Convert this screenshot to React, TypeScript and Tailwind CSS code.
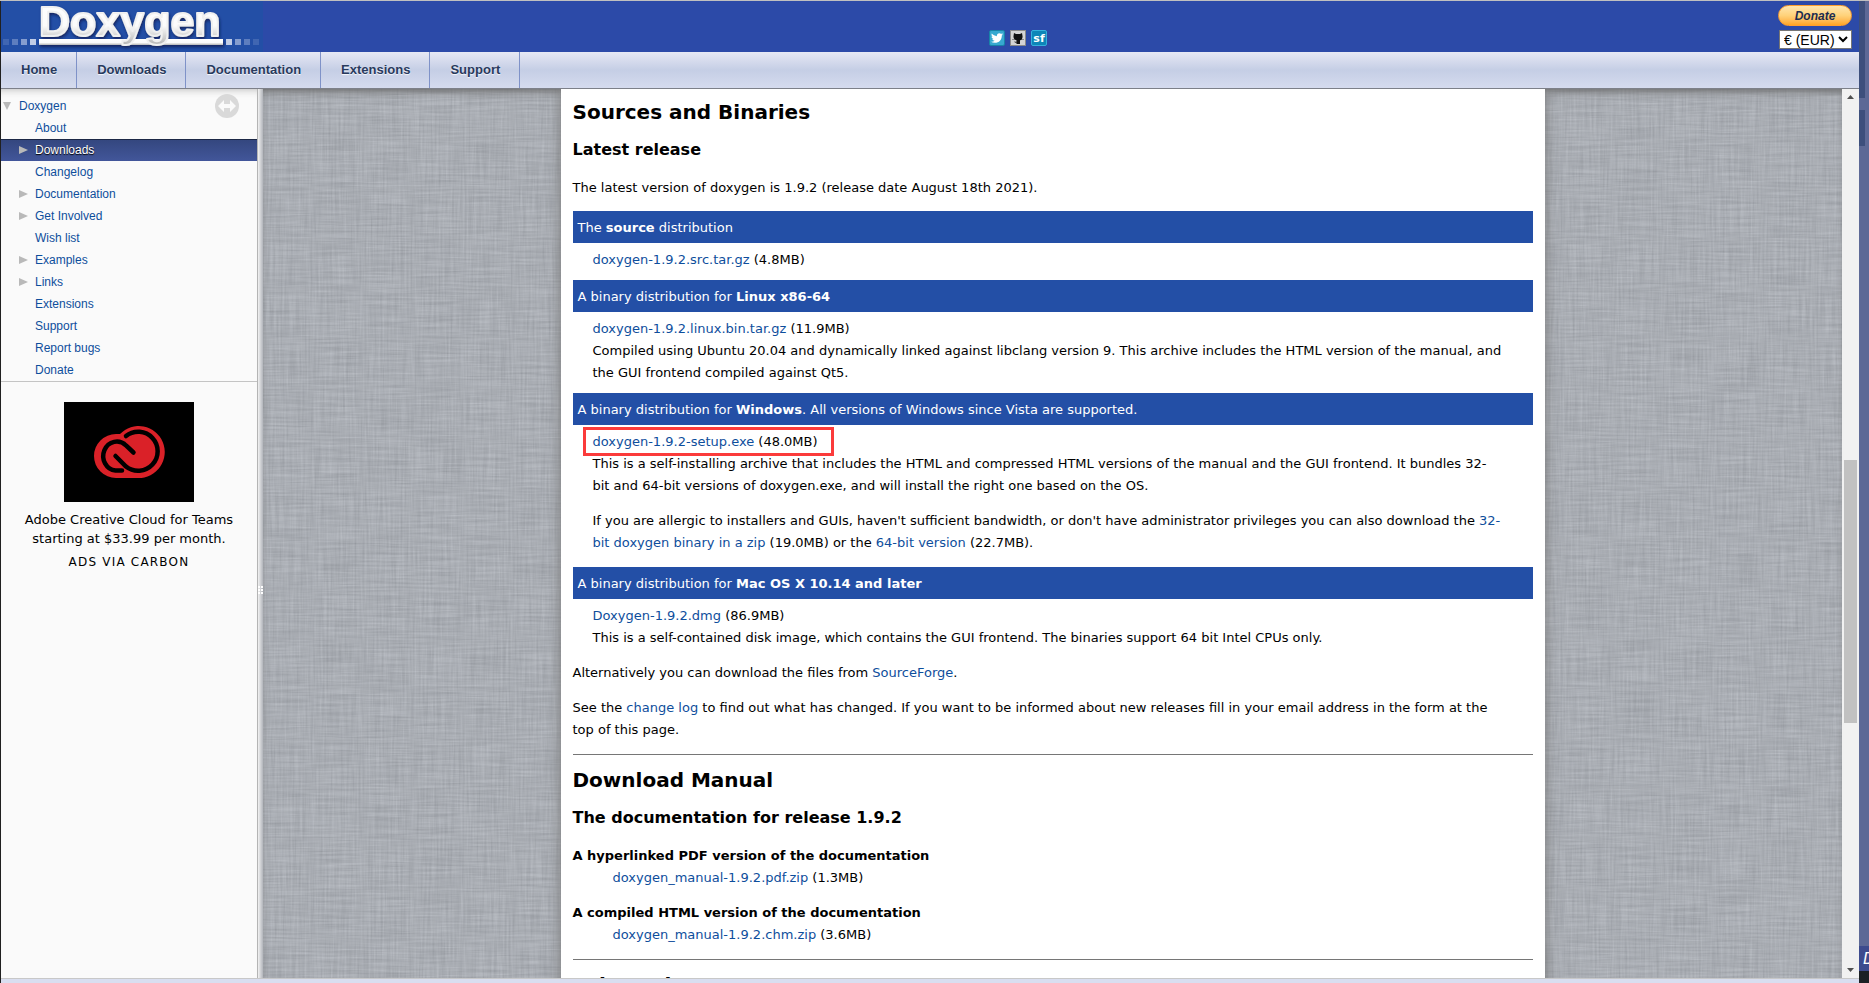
import { FaTwitter } from 'react-icons/fa';

const tabs = ['Home', 'Downloads', 'Documentation', 'Extensions', 'Support'];

const navItems = [
  { label: 'About' },
  { label: 'Downloads', arrow: true, selected: true },
  { label: 'Changelog' },
  { label: 'Documentation', arrow: true },
  { label: 'Get Involved', arrow: true },
  { label: 'Wish list' },
  { label: 'Examples', arrow: true },
  { label: 'Links', arrow: true },
  { label: 'Extensions' },
  { label: 'Support' },
  { label: 'Report bugs' },
  { label: 'Donate' },
];

function Logo() {
  return (
    <svg className="shrink-0" width="262" height="51" viewBox="0 0 262 51" role="img" aria-label="Doxygen">
      <defs>
        <linearGradient id="metal" x1="0" y1="0" x2="0" y2="1">
          <stop offset="0" stopColor="#ffffff" />
          <stop offset="0.6" stopColor="#fbfbfb" />
          <stop offset="1" stopColor="#b4b4b4" />
        </linearGradient>
        <filter id="logo-shadow" x="-10%" y="-20%" width="120%" height="150%">
          <feDropShadow dx="1" dy="2" stdDeviation="1.5" floodColor="#0a1f50" floodOpacity="0.8" />
        </filter>
      </defs>
      <rect width="262" height="51" fill="#234fa6" />
      {[[2, 0.15], [11, 0.3], [20, 0.5], [29, 0.8], [225, 0.8], [234, 0.5], [243, 0.3], [252, 0.15]].map(([x, opacity]) => (
        <rect key={x} x={x} y="38" width="6" height="6" fill="#e8ecf8" opacity={opacity} />
      ))}
      <g filter="url(#logo-shadow)">
        <rect x="38" y="38" width="184" height="6" fill="url(#metal)" />
        <text
          x="38"
          y="35"
          fontFamily="'Liberation Sans', Arial, sans-serif"
          fontWeight="700"
          fontSize="43"
          fill="url(#metal)"
          stroke="#f0f0f0"
          strokeWidth="2"
          strokeLinejoin="round"
        >
          Doxygen
        </text>
      </g>
    </svg>
  );
}

// Woven cloth behind the page contents
function Linen() {
  return (
    <svg className="absolute inset-0 h-full w-full" aria-hidden="true">
      <filter id="warp" x="0" y="0" width="100%" height="100%" colorInterpolationFilters="sRGB">
        <feTurbulence type="fractalNoise" baseFrequency="0.5 0.02" numOctaves="3" seed="4" />
        <feColorMatrix values="0.2 0 0 0 0.565  0.2 0 0 0 0.58  0.2 0 0 0 0.61  0 0 0 0 1" />
      </filter>
      <filter id="weft" x="0" y="0" width="100%" height="100%" colorInterpolationFilters="sRGB">
        <feTurbulence type="fractalNoise" baseFrequency="0.02 0.5" numOctaves="3" seed="9" />
        <feColorMatrix values="0.22 0 0 0 0.555  0.22 0 0 0 0.57  0.22 0 0 0 0.59  0 0 0 0 1" />
      </filter>
      <rect width="100%" height="100%" filter="url(#warp)" />
      <rect width="100%" height="100%" filter="url(#weft)" opacity="0.5" />
    </svg>
  );
}

function A({ children }: { children: React.ReactNode }) {
  return <a href="#" className="text-[#0e4e9c]">{children}</a>;
}

function Bar({ children }: { children: React.ReactNode }) {
  return <div className="bg-[#234fa6] px-[5px] pt-1.5 pb-1 text-white">{children}</div>;
}

function Item({ children }: { children: React.ReactNode }) {
  return <div className="pt-1.5 pb-[9px] pl-5">{children}</div>;
}

function Header() {
  return (
    <header className="flex h-[51px] shrink-0 bg-[#2c4aa8]">
      <Logo />
      <div className="flex flex-1 items-end justify-center gap-[5px] pb-1.5">
        <a href="#" aria-label="Twitter" className="flex h-4 w-4 items-center justify-center rounded-xs border border-[#1883a8] bg-[#37a9d0] text-white">
          <FaTwitter size={12} />
        </a>
        <a href="#" aria-label="GitHub" className="flex h-4 w-4 items-center justify-center border border-[#8a8a8a] bg-[#d4d4d4] text-black">
          <svg width="12" height="12" viewBox="0 0 12 12">
            <path d="M0 7.500h12" stroke="#555" strokeWidth="0.600" />
            <path d="M2 1l2 1h4l2-1 .5 3c.3 2.500-.8 4-2.500 4.300V12H4.500v-1.500C3 11 2.500 10 2 9.500c1 0 1.500.5 2.500.3V8.300C2.500 8 1.300 6.500 1.500 4z" fill="#111" />
          </svg>
        </a>
        <a href="#" aria-label="SourceForge" className="flex h-4 w-4 items-center justify-center rounded-xs border border-[#35b0dc] bg-[#0d86b8] font-['DejaVu_Sans'] text-[11px] leading-none font-bold text-white">
          sf
        </a>
      </div>
      <div className="flex w-[86px] flex-col items-end gap-1 pt-1 pr-[7px]">
        <button className="h-[21px] w-[74px] rounded-full border border-[#ff9f2e] bg-linear-to-b from-[#ffe6ad] via-[#ffd27a] to-[#ffa51f] font-['Liberation_Sans'] text-xs leading-none font-bold text-[#1c2c50] italic">
          Donate
        </button>
        <select
          aria-label="Currency"
          className="h-[19px] w-[73px] border border-[#767676] bg-white font-['Liberation_Sans'] text-sm leading-none text-black"
        >
          <option>€ (EUR)</option>
        </select>
      </div>
    </header>
  );
}

function Sidebar() {
  return (
    <aside className="relative w-64 shrink-0 bg-[#fafafa] shadow-[inset_0_8px_8px_-8px_#b0b0b0]">
      <button aria-label="Sync navigation" className="absolute top-[5px] right-[18px]">
        <svg width="24" height="24" viewBox="0 0 24 24">
          <circle cx="12" cy="12" r="12" fill="#d9d9d9" />
          <path d="M3 12l6-6v4h6V6l6 6-6 6v-4H9v4z" fill="#fafafa" />
        </svg>
      </button>
      <nav className="border-b border-[#c4c4c4] pt-1.5 font-['Liberation_Sans'] text-xs leading-[22px] text-[#0e4e9c]">
        <div className="flex items-center">
          <span className="w-[18px] pl-0.5">
            <svg width="9" height="9" viewBox="0 0 9 9"><path d="M0 0h8l-4 8z" fill="#b9b9b9" /></svg>
          </span>
          <a href="#">Doxygen</a>
        </div>
        {navItems.map((item) => (
          <div
            key={item.label}
            className={
              item.selected
                ? 'flex items-center border-t border-[#1b2745] bg-linear-to-b from-[#34477f] to-[#42569a] leading-[21px] text-white [text-shadow:0_1px_1px_#000]'
                : 'flex items-center'
            }
          >
            <span className="w-[34px] pl-[18px]">
              {item.arrow && (
                <svg width="9" height="9" viewBox="0 0 9 9"><path d="M0 0l9 4-9 4z" fill="#b9b9b9" /></svg>
              )}
            </span>
            <a href="#">{item.label}</a>
          </div>
        ))}
      </nav>
      <div className="flex flex-col items-center pt-5 text-center text-[13px] leading-[19px] text-black">
        <a href="#" aria-label="Adobe Creative Cloud">
          <svg width="130" height="100" viewBox="0 0 130 100">
            <rect width="130" height="100" fill="#000" />
            <path d="M52 32a21 21 0 0 0 0 44h22a26 26 0 1 0-18-44z" fill="#da2128" />
            <path
              d="M58 68.500H51.500A13.500 14.500 0 1 1 62 43.500L69.500 50.500M51.500 54L62 64.500A19.500 19.500 0 1 0 62 34"
              fill="none"
              stroke="#000"
              strokeWidth="4.500"
              strokeLinecap="round"
            />
          </svg>
        </a>
        <a href="#" className="mt-2 px-5">Adobe Creative Cloud for Teams starting at $33.99 per month.</a>
        <a href="#" className="mt-[5px] text-xs leading-[19px] tracking-widest uppercase">ads via Carbon</a>
      </div>
    </aside>
  );
}

function Contents() {
  return (
    <main className="relative mx-auto w-full max-w-[984px] bg-white px-3 pb-4 text-[13px] leading-[22px] text-black shadow-[0_0_12px_#777]">
      <h1 className="pt-2.5 text-[20px] leading-[26px] font-bold">Sources and Binaries</h1>
      <h2 className="mt-3.5 text-[16px] leading-[22px] font-bold">Latest release</h2>
      <p className="mt-4 mb-3">The latest version of doxygen is 1.9.2 (release date August 18th 2021).</p>

      <Bar>The <b>source</b> distribution</Bar>
      <Item><A>doxygen-1.9.2.src.tar.gz</A> (4.8MB)</Item>

      <Bar>A binary distribution for <b>Linux x86-64</b></Bar>
      <Item>
        <A>doxygen-1.9.2.linux.bin.tar.gz</A> (11.9MB)
        <br />
        Compiled using Ubuntu 20.04 and dynamically linked against libclang version 9. This archive includes the HTML version of the manual, and
        <br />
        the GUI frontend compiled against Qt5.
      </Item>

      <Bar>A binary distribution for <b>Windows</b>. All versions of Windows since Vista are supported.</Bar>
      <Item>
        <span className="relative">
          <A>doxygen-1.9.2-setup.exe</A> (48.0MB)
          <span className="absolute -top-[7px] -right-4 -bottom-[7px] -left-2.5 border-3 border-[#fb3b3b]" />
        </span>
        <br />
        This is a self-installing archive that includes the HTML and compressed HTML versions of the manual and the GUI frontend. It bundles 32-
        <br />
        bit and 64-bit versions of doxygen.exe, and will install the right one based on the OS.
        <p className="mt-[13px] mb-1">
          If you are allergic to installers and GUIs, haven't sufficient bandwidth, or don't have administrator privileges you can also download the{' '}
          <A>32-<br />bit doxygen binary in a zip</A> (19.0MB) or the <A>64-bit version</A> (22.7MB).
        </p>
      </Item>

      <Bar>A binary distribution for <b>Mac OS X 10.14 and later</b></Bar>
      <Item>
        <A>Doxygen-1.9.2.dmg</A> (86.9MB)
        <br />
        This is a self-contained disk image, which contains the GUI frontend. The binaries support 64 bit Intel CPUs only.
      </Item>

      <p className="mt-1 mb-[13px]">Alternatively you can download the files from <A>SourceForge</A>.</p>
      <p className="my-[13px]">
        See the <A>change log</A> to find out what has changed. If you want to be informed about new releases fill in your email address in the form at the
        <br />
        top of this page.
      </p>

      <hr className="border-[#767676]" />
      <h1 className="pt-3 text-[20px] leading-[26px] font-bold">Download Manual</h1>
      <h2 className="mt-3.5 text-[16px] leading-[22px] font-bold">The documentation for release 1.9.2</h2>
      <dl className="mt-4 mb-[13px]">
        <dt className="font-bold">A hyperlinked PDF version of the documentation</dt>
        <dd className="pl-10"><A>doxygen_manual-1.9.2.pdf.zip</A> (1.3MB)</dd>
        <dt className="mt-[13px] font-bold">A compiled HTML version of the documentation</dt>
        <dd className="pl-10"><A>doxygen_manual-1.9.2.chm.zip</A> (3.6MB)</dd>
      </dl>
      <hr className="border-[#767676]" />
      <h1 className="pt-3 text-[20px] leading-[26px] font-bold">Other mirrors</h1>
    </main>
  );
}

function Scrollbar() {
  return (
    <div className="flex w-[17px] shrink-0 flex-col items-center bg-[#f1f1f1] py-1.5">
      <svg width="7" height="4" viewBox="0 0 7 4"><path d="M0 4l3.500-4L7 4z" fill="#505050" /></svg>
      <div className="w-full grow-[360]" />
      <div className="w-[13px] grow-[263] bg-[#c1c1c1]" />
      <div className="w-full grow-[244]" />
      <svg width="7" height="4" viewBox="0 0 7 4"><path d="M0 0l3.500 4L7 0z" fill="#505050" /></svg>
    </div>
  );
}

export default function App() {
  return (
    <div className="flex h-screen overflow-hidden border-t border-t-[#c0c0c0] bg-[#5d6996] font-['DejaVu_Sans',Verdana,sans-serif]">
      <div className="w-px shrink-0 bg-[#202020]" />
      <div className="flex min-w-0 flex-1 flex-col">
        <Header />
        <nav className="flex h-[37px] shrink-0 border-b border-[#7d8089] bg-linear-to-b from-[#e6e8f4] from-0% via-[#c5cee5] via-50% to-[#d5dbee] font-['Liberation_Sans'] text-[13px] leading-[35px] font-bold text-[#283a5d] [text-shadow:0_1px_1px_rgba(255,255,255,0.9)]">
          {tabs.map((tab) => (
            <a key={tab} href="#" className="border-r border-[#7f92c8] pr-[19px] pl-5">
              {tab}
            </a>
          ))}
        </nav>
        <div className="flex min-h-0 flex-1">
          <Sidebar />
          <div className="flex w-1.5 shrink-0 items-center border-l border-[#b4b4b4] bg-linear-to-r from-[#f2f2f2] to-[#b2b5bb] pt-28">
            <span className="h-2 w-full border-x-2 border-dotted border-white" />
          </div>
          <div className="relative min-w-0 flex-1 overflow-hidden bg-[#a9adb5]">
            <Linen />
            <div className="absolute inset-0 shadow-[inset_0_6px_8px_-4px_#666]" />
            <Contents />
          </div>
          <Scrollbar />
        </div>
        <div className="h-[5px] shrink-0 border-t border-[#c8c8c8] bg-[#d9def0]" />
      </div>
      <div className="flex w-2.5 shrink-0 flex-col">
        <div className="h-[97px] w-1.5 bg-[#3d4f7c]" />
        <div className="mt-3 h-9 w-1.5 bg-[#3d4f7c]" />
        <div className="flex-1" />
        <div className="h-[25px] overflow-hidden bg-[#3d4b8e] pl-1 font-['Liberation_Sans'] text-base leading-[25px] text-white italic">D</div>
        <div className="h-3 bg-[#1b2024]" />
      </div>
    </div>
  );
}
